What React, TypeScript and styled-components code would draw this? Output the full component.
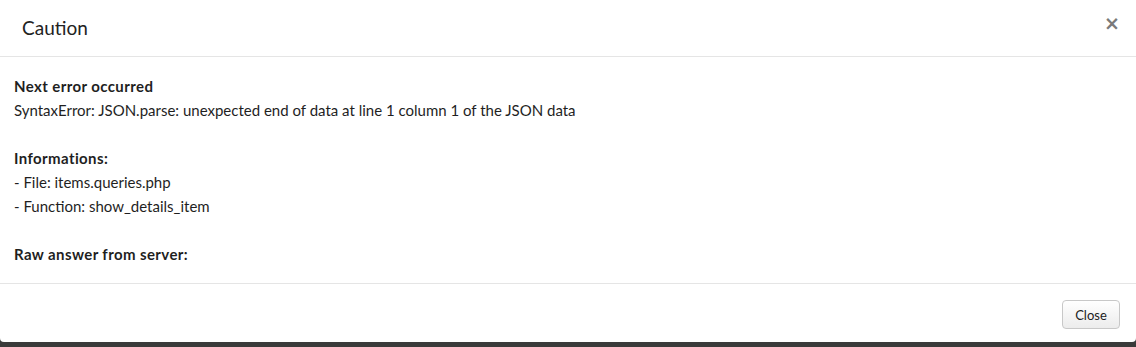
import React from "react";
import styled, { createGlobalStyle } from "styled-components";

const Global = createGlobalStyle`
  html, body { margin: 0; padding: 0; }
  body {
    background: #3a3a3a;
    font-family: Lato, "Open Sans", sans-serif;
    color: #222;
  }
`;

const Modal = styled.div`
  width: 1136px;
  height: 342px;
  background: #fff;
  border-radius: 0 0 4px 4px;
  display: flex;
  flex-direction: column;
  box-sizing: border-box;
`;

const Header = styled.div`
  height: 57px;
  box-sizing: border-box;
  border-bottom: 1px solid #e5e5e5;
  display: flex;
  align-items: center;
  justify-content: space-between;
  padding: 0 16px 2px 22px;
`;

const Title = styled.h4`
  margin: 0;
  font-size: 19px;
  font-weight: 400;
  color: #222;
`;

const CloseX = styled.button`
  border: 0;
  background: transparent;
  padding: 0;
  margin-bottom: 8px;
  font-size: 19px;
  font-weight: 700;
  line-height: 1;
  color: #7a7a7a;
  cursor: pointer;
  font-family: "DejaVu Sans", sans-serif;
`;

const Body = styled.div`
  flex: 1;
  padding: 17px 14px 16px;
  font-size: 15px;
  line-height: 24px;
  color: #1f1f1f;
  border-bottom: 1px solid #e5e5e5;
`;

const Line = styled.div<{ $bold?: boolean }>`
  font-weight: ${(p) => (p.$bold ? 700 : 400)};
  letter-spacing: ${(p) => (p.$bold ? "0.4px" : "0")};
  min-height: 24px;
`;

const Footer = styled.div`
  display: flex;
  justify-content: flex-end;
  padding: 16px 16px 13px;
`;

const Button = styled.button`
  height: 29px;
  width: 58px;
  border: 1px solid #c8c8c8;
  border-radius: 4px;
  background: linear-gradient(#ffffff, #ececec);
  font-family: Lato, "Open Sans", sans-serif;
  font-size: 13px;
  color: #222;
  padding: 0;
`;

export default function App() {
  return (
    <>
      <Global />
      <Modal>
        <Header>
          <Title>Caution</Title>
          <CloseX aria-label="close">×</CloseX>
        </Header>
        <Body>
          <Line $bold>Next error occurred</Line>
          <Line>SyntaxError: JSON.parse: unexpected end of data at line 1 column 1 of the JSON data</Line>
          <Line />
          <Line $bold>Informations:</Line>
          <Line>- File: items.queries.php</Line>
          <Line>- Function: show_details_item</Line>
          <Line />
          <Line $bold>Raw answer from server:</Line>
        </Body>
        <Footer>
          <Button>Close</Button>
        </Footer>
      </Modal>
    </>
  );
}
